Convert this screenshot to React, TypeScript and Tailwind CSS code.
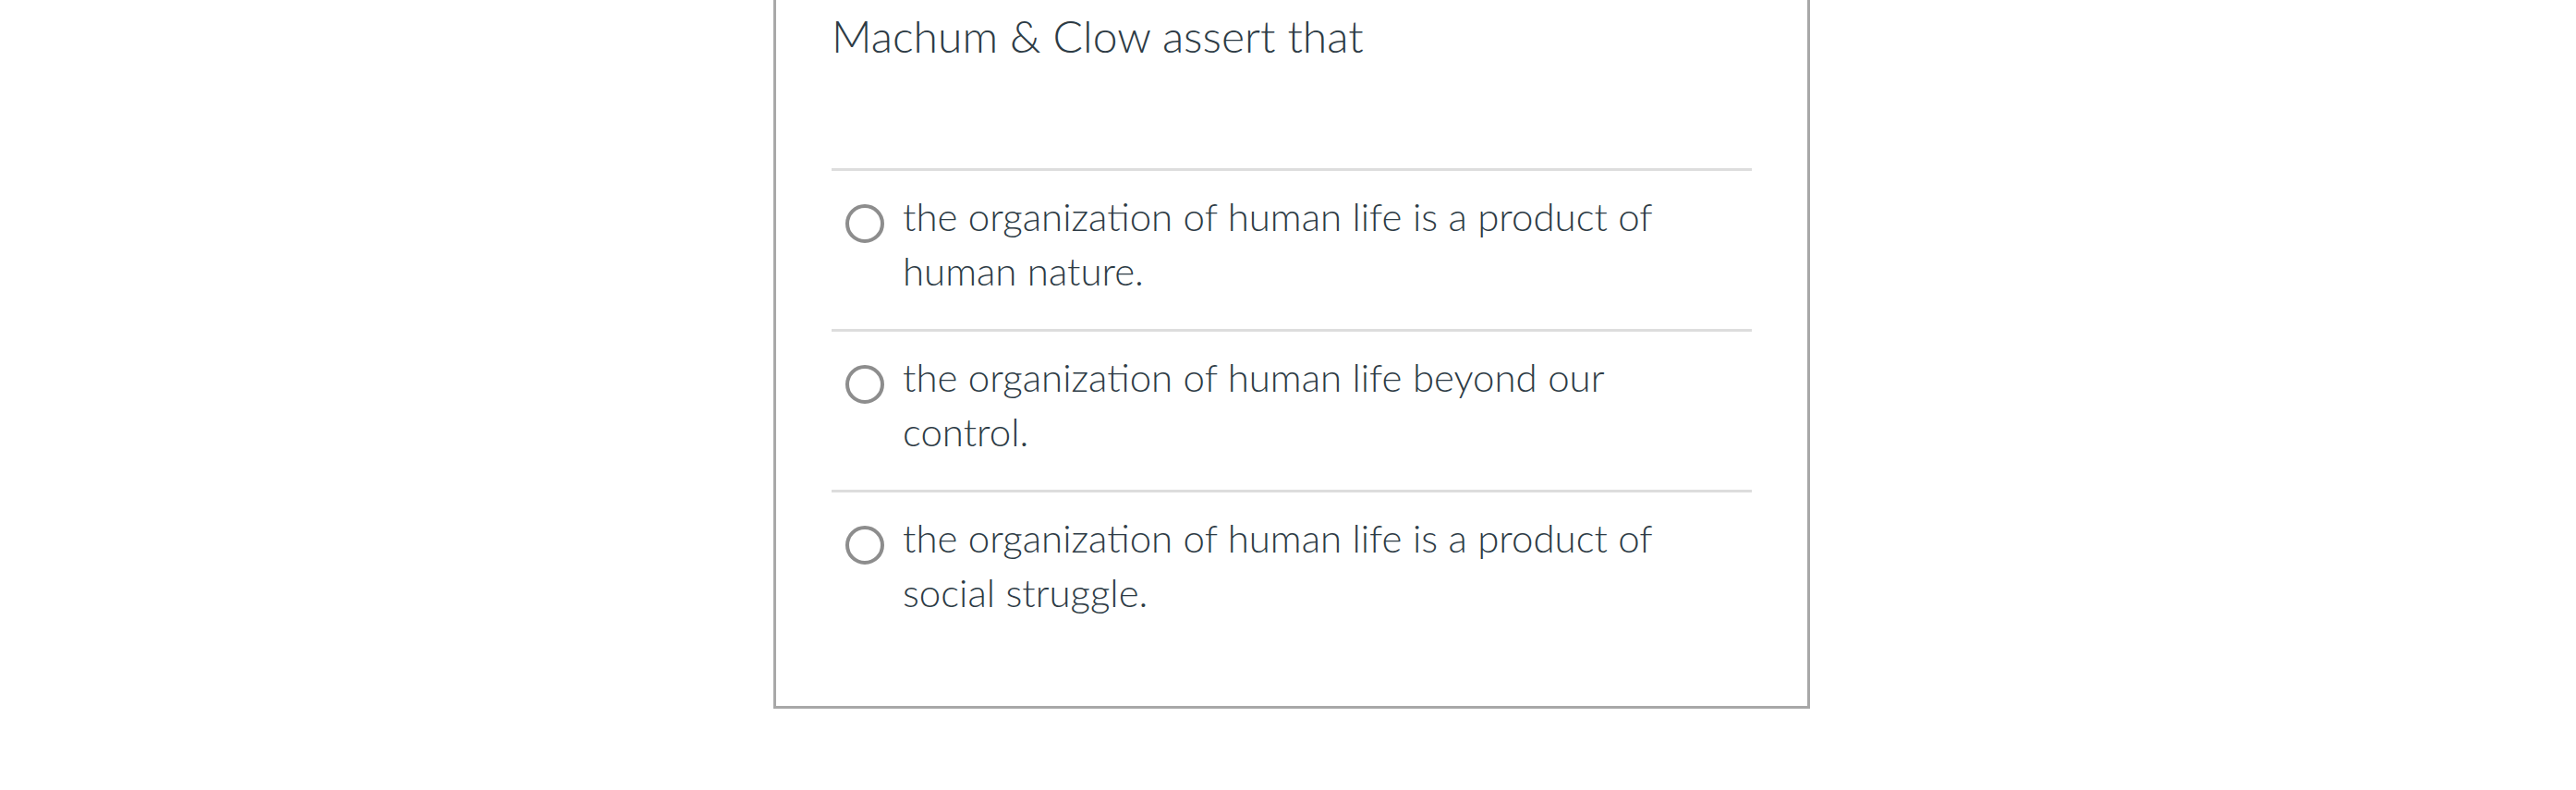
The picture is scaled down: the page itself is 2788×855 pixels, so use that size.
import React from "react";

const answers = [
  "the organization of human life is a product of human nature.",
  "the organization of human life beyond our control.",
  "the organization of human life is a product of social struggle.",
];

function Radio() {
  return (
    <span className="mt-[16px] block h-[42px] w-[42px] shrink-0 rounded-full border-[4px] border-[#8d8d8d] bg-white" />
  );
}

export default function App() {
  return (
    <div
      className="min-h-[855px] w-full bg-white text-[#2d3b45]"
      style={{ fontFamily: 'Lato, "Open Sans", "Liberation Sans", sans-serif' }}
    >
      <div className="ml-[837px] mt-[-20px] w-[1122px] border-[3px] border-[#a8a8a8] bg-white px-[60px] pb-[60px] pt-[26px]">
        <div className="mb-[114px] text-[48px] font-light leading-[59px]">
          Machum &amp; Clow assert that
        </div>
        <div>
          {answers.map((a) => (
            <div
              key={a}
              className="flex gap-[20px] border-t-[3px] border-[#dddddd] pb-[33px] pl-[15px] pt-[20px]"
            >
              <Radio />
              <div className="w-[860px] text-[42px] font-light leading-[59px]">{a}</div>
            </div>
          ))}
        </div>
      </div>
    </div>
  );
}
